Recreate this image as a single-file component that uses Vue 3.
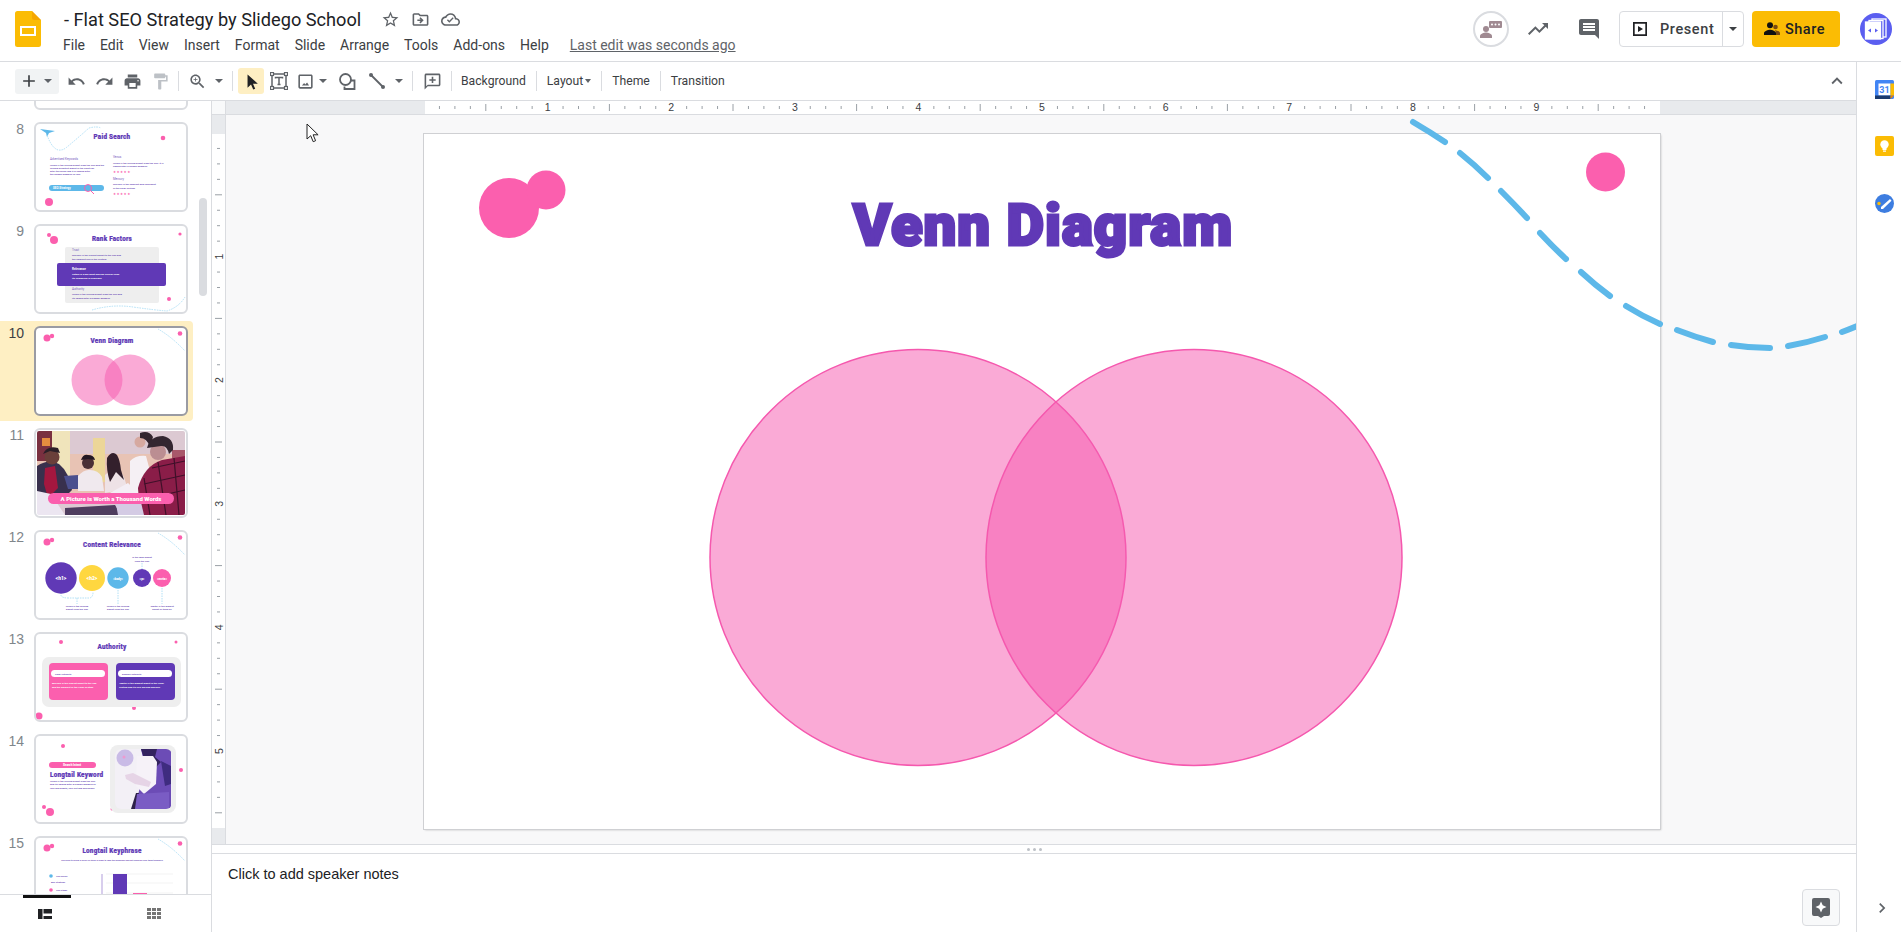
<script setup>
import { computed } from "vue";

const icons = {
  star: "M22 9.24l-7.19-.62L12 2 9.19 8.63 2 9.24l5.46 4.73L5.82 21 12 17.27 18.18 21l-1.63-7.03L22 9.24zM12 15.4l-3.76 2.27 1-4.28-3.32-2.88 4.38-.38L12 6.1l1.71 4.04 4.38.38-3.32 2.88 1 4.28L12 15.4z",
  move: "M20 6h-8l-2-2H4c-1.1 0-1.99.9-1.99 2L2 18c0 1.1.9 2 2 2h16c1.1 0 2-.9 2-2V8c0-1.1-.9-2-2-2zm0 12H4V6h5.17l2 2H20v10zm-8.01-9l-1.41 1.41L12.16 12H8v2h4.16l-1.59 1.59L11.99 17 16 13.01 11.99 9z",
  cloud: "M19.35 10.04C18.67 6.59 15.64 4 12 4 9.11 4 6.6 5.64 5.35 8.04 2.34 8.36 0 10.91 0 14c0 3.31 2.69 6 6 6h13c2.76 0 5-2.24 5-5 0-2.64-2.05-4.78-4.65-4.96zM19 18H6c-2.21 0-4-1.79-4-4s1.79-4 4-4h.71C7.37 7.69 9.48 6 12 6c3.04 0 5.5 2.46 5.5 5.5v.5H19c1.66 0 3 1.34 3 3s-1.34 3-3 3zM10.5 16l-3-3 1.2-1.2 1.8 1.8 4.3-4.3 1.2 1.2z",
  trend: "M16 6l2.29 2.29-4.88 4.88-4-4L2 16.59 3.41 18l6-6 4 4 6.3-6.29L22 12V6z",
  comment: "M21.99 4c0-1.1-.89-2-1.99-2H4c-1.1 0-2 .9-2 2v12c0 1.1.9 2 2 2h14l4 4-.01-18zM18 14H6v-2h12v2zm0-3H6V9h12v2zm0-3H6V6h12v2z",
  plus: "M19 13h-6v6h-2v-6H5v-2h6V5h2v6h6v2z",
  undo: "M12.5 8c-2.65 0-5.05.99-6.9 2.6L2 7v9h9l-3.62-3.62c1.39-1.16 3.16-1.88 5.12-1.88 3.54 0 6.55 2.31 7.6 5.5l2.37-.78C21.08 11.03 17.15 8 12.5 8z",
  redo: "M18.4 10.6C16.55 8.99 14.15 8 11.5 8c-4.65 0-8.58 3.03-9.96 7.22L3.9 16c1.05-3.19 4.05-5.5 7.6-5.5 1.95 0 3.73.72 5.12 1.88L13 16h9V7l-3.6 3.6z",
  print: "M19 8H5c-1.66 0-3 1.34-3 3v6h4v4h12v-4h4v-6c0-1.66-1.34-3-3-3zm-3 11H8v-5h8v5zm3-7c-.55 0-1-.45-1-1s.45-1 1-1 1 .45 1 1-.45 1-1 1zm-1-9H6v4h12V3z",
  paint: "M18 4V3c0-.55-.45-1-1-1H5c-.55 0-1 .45-1 1v4c0 .55.45 1 1 1h12c.55 0 1-.45 1-1V6h1v4H9v11c0 .55.45 1 1 1h2c.55 0 1-.45 1-1v-9h8V4h-3z",
  zoom: "M15.5 14h-.79l-.28-.27C15.41 12.59 16 11.11 16 9.5 16 5.91 13.09 3 9.5 3S3 5.91 3 9.5 5.91 16 9.5 16c1.61 0 3.09-.59 4.23-1.57l.27.28v.79l5 4.99L20.49 19l-4.99-5zm-6 0C7.01 14 5 11.99 5 9.5S7.01 5 9.5 5 14 7.01 14 9.5 11.99 14 9.5 14zM12 10h-2v2H9v-2H7V9h2V7h1v2h2v1z",
  cursor: "M7 3v17l4.400-4.200 2.800 6.400 2.500-1.100-2.800-6.300H20z",
  image: "M19 3H5c-1.100 0-2 .9-2 2v14c0 1.100.9 2 2 2h14c1.100 0 2-.9 2-2V5c0-1.100-.9-2-2-2zm0 16H5V5h14v14zm-5.040-5.710l-2.200 2.500-1.500-1.800L7.500 17h9l-2.540-3.710z",
  addComment: "M20 2H4c-1.1 0-2 .9-2 2v18l4-4h14c1.1 0 2-.9 2-2V4c0-1.1-.9-2-2-2zm0 14H6l-2 2V4h16v12zM13 6h-2v3H8v2h3v3h2v-3h3V9h-3z",
  chevronUp: "M12 8l-6 6 1.41 1.41L12 10.83l4.59 4.58L18 14z",
  chevronRight: "M10 6L8.59 7.41 13.17 12l-4.58 4.59L10 18l6-6z",
};

const menu = ["File", "Edit", "View", "Insert", "Format", "Slide", "Arrange", "Tools", "Add-ons", "Help"];

const inch = 123.6;
const ticks = computed(() => {
  const list = [];
  for (let i = 1; i < 80; i++) list.push({ at: (i * inch) / 8, n: i / 8, kind: i % 8 == 0 ? "num" : i % 8 == 4 ? "long" : "short" });
  return list;
});
const topTicks = computed(() => ticks.value);
const sideTicks = computed(() => ticks.value.filter((t) => t.at < 695));

const lorem = "Venus is the second planet from the Sun";
const venusDashes =
  "M1413 122Q1430 132 1445 142M1460 153Q1475 165 1488 178M1501 191Q1514 204 1527 218M1540 233Q1553 247 1566 259M1581 272Q1595 285 1610 296M1626 306Q1642 316 1660 324M1677 330Q1695 337 1713 342M1731 345Q1750 348 1770 348M1788 346Q1806 343 1825 337M1842 332Q1850 329 1862 324";
</script>

<template>
  <div class="app">
    <header class="topbar">
      <svg class="logo" viewBox="0 0 26 36">
        <path d="M2.5 0H17l9 9v24.5a2.5 2.5 0 0 1-2.500 2.500h-21A2.500 2.500 0 0 1 0 33.500v-31A2.500 2.500 0 0 1 2.500 0z" fill="#fbbc04" />
        <path d="M17 0l9 9h-6.500A2.500 2.500 0 0 1 17 6.500z" fill="#f09300" opacity=".55" />
        <path d="M5 15h16v10H5zm2 2v6h12v-6z" fill="#fff" />
      </svg>
      <div class="doc">
        <div class="doc-title">
          <span class="name">- Flat SEO Strategy by Slidego School</span>
          <svg class="ic title-ic" viewBox="0 0 24 24"><path :d="icons.star" /></svg>
          <svg class="ic title-ic" viewBox="0 0 24 24"><path :d="icons.move" /></svg>
          <svg class="ic title-ic" viewBox="0 0 24 24"><path :d="icons.cloud" /></svg>
        </div>
        <nav class="menu">
          <span v-for="m in menu" :key="m">{{ m }}</span>
          <a class="last-edit">Last edit was seconds ago</a>
        </nav>
      </div>
      <div class="actions">
        <div class="collab">
          <svg viewBox="0 0 24 24" width="24" height="24">
            <circle cx="7" cy="12" r="3" fill="#a08a92" />
            <path d="M1 21v-2c0-2 4-3.500 6-3.500s6 1.500 6 3.500v2z" fill="#a08a92" />
            <rect x="10" y="4" width="13" height="7" rx="1" fill="#a08a92" />
            <circle cx="13" cy="7.500" r="1" fill="#fff" /><circle cx="16.500" cy="7.500" r="1" fill="#fff" /><circle cx="20" cy="7.500" r="1" fill="#fff" />
          </svg>
        </div>
        <svg class="ic trend" viewBox="0 0 24 24"><path :d="icons.trend" /></svg>
        <svg class="ic chat" viewBox="0 0 24 24"><path :d="icons.comment" /></svg>
        <div class="present">
          <div class="present-main">
            <svg viewBox="0 0 14 14" width="14" height="14"><path d="M0 0h14v14H0zm1.700 1.700v10.600h10.600V1.700zM5 4l5 3-5 3z" fill="#202124" fill-rule="evenodd" /></svg>
            <span>Present</span>
          </div>
          <div class="present-more"><i class="caret dark"></i></div>
        </div>
        <div class="share">
          <svg viewBox="0 0 16 14" width="16" height="14">
            <circle cx="6" cy="3.300" r="3" fill="#111" />
            <path d="M0 13v-2c0-2 4-3.300 6-3.300s6 1.300 6 3.300v2z" fill="#111" />
            <circle cx="11.500" cy="5" r="2.300" fill="#7a4a10" />
            <path d="M12 13v-2c0-1-.5-2-1.500-2.700 2 0 5.500 1 5.500 2.700v2z" fill="#7a4a10" />
          </svg>
          <span>Share</span>
        </div>
        <svg class="avatar" viewBox="0 0 32 32">
          <circle cx="16" cy="16" r="16" fill="#5b5ef0" />
          <g fill="#5b5ef0" stroke="#fff" stroke-width="1.300">
            <rect x="12" y="6" width="14" height="18" />
            <rect x="9" y="7.500" width="14" height="18" />
            <rect x="5.500" y="9" width="15" height="17" fill="#fff" />
          </g>
          <path d="M11 15.500v4l-3-2zM15 15.500v4l3-2z" fill="#5b5ef0" />
        </svg>
      </div>
    </header>

    <div class="body">
      <div class="work">
        <div class="toolbar">
          <div class="add">
            <svg class="ic plus" viewBox="0 0 24 24"><path :d="icons.plus" /></svg>
            <i class="caret"></i>
          </div>
          <button class="tool undo"><svg class="ic" viewBox="0 0 24 24"><path :d="icons.undo" /></svg></button>
          <button class="tool"><svg class="ic" viewBox="0 0 24 24"><path :d="icons.redo" /></svg></button>
          <button class="tool"><svg class="ic" viewBox="0 0 24 24"><path :d="icons.print" /></svg></button>
          <button class="tool"><svg class="ic faded" viewBox="0 0 24 24"><path :d="icons.paint" /></svg></button>
          <span class="sep sep-a"></span>
          <button class="tool"><svg class="ic" viewBox="0 0 24 24"><path :d="icons.zoom" /></svg></button>
          <button class="more"><i class="caret"></i></button>
          <span class="sep sep-b"></span>
          <button class="tool selected"><svg class="ic dark-ic" viewBox="0 0 24 24"><path :d="icons.cursor" /></svg></button>
          <button class="tool">
            <svg class="outline" viewBox="0 0 18 18" width="18" height="18">
              <rect x="2" y="2" width="14" height="14" />
              <rect class="knob" x=".5" y=".5" width="3" height="3" /><rect class="knob" x="14.500" y=".5" width="3" height="3" />
              <rect class="knob" x=".5" y="14.500" width="3" height="3" /><rect class="knob" x="14.500" y="14.500" width="3" height="3" />
              <path d="M5.500 6.500v-1h7v1M9 5.500v7M7.500 12.500h3" />
            </svg>
          </button>
          <button class="tool narrow"><svg class="ic" viewBox="0 0 24 24"><path :d="icons.image" /></svg></button>
          <button class="more tight"><i class="caret"></i></button>
          <button class="tool shape">
            <svg class="outline thick" viewBox="0 0 18 18" width="18" height="18">
              <circle cx="7.500" cy="7.500" r="5.500" />
              <path d="M12 8.500h4.500v8.500H6.500v-2.500" />
            </svg>
          </button>
          <button class="tool line">
            <svg class="outline" viewBox="0 0 18 18" width="18" height="18">
              <path class="bar" d="M3 3l12 12" />
              <circle class="dot" cx="3" cy="3" r="2" /><circle class="dot" cx="15" cy="15" r="2" />
            </svg>
          </button>
          <button class="more"><i class="caret"></i></button>
          <span class="sep sep-c"></span>
          <button class="tool"><svg class="ic" viewBox="0 0 24 24"><path :d="icons.addComment" /></svg></button>
          <span class="sep sep-d"></span>
          <span class="txt">Background</span>
          <span class="sep"></span>
          <span class="txt">Layout<i class="caret small"></i></span>
          <span class="sep"></span>
          <span class="txt">Theme</span>
          <span class="sep"></span>
          <span class="txt">Transition</span>
          <svg class="ic collapse" viewBox="0 0 24 24"><path :d="icons.chevronUp" /></svg>
        </div>

        <div class="main">
          <aside class="film">
            <div class="strip">
              <div class="strip-inner">
                <div class="row">
                  <span class="num"></span>
                  <div class="thumb"></div>
                </div>

                <div class="row">
                  <span class="num">8</span>
                  <div class="thumb">
                    <svg viewBox="2 2 150 86">
                      <path d="M6 7l15 2-6 2-2 4-1-4z" fill="#5db8e9" />
                      <path d="M13 13q8 22 20 12t22-19q8-2 12 0" class="mini-dash" />
                      <text x="78" y="17" class="t-title">Paid Search</text>
                      <circle cx="129" cy="16" r="2.300" fill="#fb5fae" />
                      <circle cx="15" cy="80" r="4" fill="#fb5fae" />
                      <text x="16" y="38" class="t-head">Advertised Keywords</text>
                      <text x="16" y="44" class="t-line">{{ lorem }} and the</text>
                      <text x="16" y="47" class="t-line">second-brightest planet in the night sky</text>
                      <text x="16" y="50" class="t-line">after the Moon and it is named after</text>
                      <text x="16" y="53" class="t-line">the Roman goddess of love</text>
                      <rect x="15" y="63" width="55" height="6" rx="3" fill="#5db8e9" />
                      <text x="19" y="67" class="t-white">SEO Strategy</text>
                      <circle cx="54" cy="66" r="3.500" fill="none" stroke="#fb5fae" stroke-width="1" />
                      <path d="M57 69l3 3" stroke="#fb5fae" stroke-width="1" />
                      <text x="79" y="36" class="t-head">Venus</text>
                      <text x="79" y="42" class="t-line">{{ lorem }}. It is</text>
                      <text x="79" y="45" class="t-line">named after a Roman goddess</text>
                      <text x="79" y="51" class="t-star">★★★★★</text>
                      <text x="79" y="58" class="t-head">Mercury</text>
                      <text x="79" y="63" class="t-line">Mercury is the smallest and innermost</text>
                      <text x="79" y="67" class="t-line">of the Solar System</text>
                      <text x="79" y="73" class="t-star">★★★★★</text>
                    </svg>
                  </div>
                </div>

                <div class="row">
                  <span class="num">9</span>
                  <div class="thumb">
                    <svg viewBox="2 2 150 86">
                      <circle cx="15" cy="11" r="2" fill="#fb5fae" />
                      <circle cx="20" cy="16" r="4" fill="#fb5fae" />
                      <circle cx="146" cy="10" r="1.600" fill="#fb5fae" />
                      <circle cx="135" cy="75" r="2" fill="#fb5fae" />
                      <text x="78" y="17" class="t-title">Rank Factors</text>
                      <rect x="31" y="23" width="94" height="56" rx="2" fill="#eee" />
                      <rect x="23" y="39" width="109" height="23" rx="2" fill="#6039b6" />
                      <text x="38" y="27" class="t-head">Trust</text>
                      <text x="38" y="32" class="t-line">Mercury is the closest planet to the Sun and</text>
                      <text x="38" y="36" class="t-line">the smallest one in the System</text>
                      <text x="38" y="46" class="t-white">Relevance</text>
                      <text x="38" y="51" class="t-white thin">Saturn is a gas giant and has several rings</text>
                      <text x="38" y="54.500" class="t-white thin">It's composed of hydrogen</text>
                      <text x="38" y="66" class="t-head">Authority</text>
                      <text x="38" y="71" class="t-line">Venus is the second planet from the Sun and</text>
                      <text x="38" y="75" class="t-line">it's named after a Roman goddess</text>
                      <path d="M58 86q20-6 41-3t34 4q12-4 18-14" class="mini-dash" />
                    </svg>
                  </div>
                </div>

                <div class="row active">
                  <span class="num">10</span>
                  <div class="thumb">
                    <svg viewBox="2 2 150 86">
                      <circle cx="13" cy="12" r="3.500" fill="#fb5fae" />
                      <circle cx="18" cy="10" r="2.200" fill="#fb5fae" />
                      <circle cx="146" cy="7.500" r="2.300" fill="#fb5fae" />
                      <text x="78" y="17" class="t-title">Venn Diagram</text>
                      <circle cx="63" cy="54" r="25.500" class="mini-venn" />
                      <circle cx="96" cy="54" r="25.500" class="mini-venn" />
                      <path d="M124 3q14 8 27 22" class="mini-dash" />
                    </svg>
                  </div>
                </div>

                <div class="row">
                  <span class="num">11</span>
                  <div class="thumb">
                    <svg viewBox="2 2 150 86">
                      <defs>
                        <clipPath id="photo11"><rect x="3" y="3" width="148" height="84" rx="2" /></clipPath>
                      </defs>
                      <g clip-path="url(#photo11)">
                        <g class="blurred">
                          <rect x="3" y="3" width="148" height="84" fill="#dcc9d2" />
                          <rect x="3" y="26" width="148" height="40" fill="#e8c3b4" />
                          <rect x="3" y="3" width="15" height="30" fill="#7a3040" />
                          <rect x="8" y="10" width="8" height="8" fill="#e58d3f" />
                          <rect x="18" y="3" width="18" height="46" fill="#f0e4bb" />
                          <rect x="59" y="10" width="12" height="44" fill="#ecd698" />
                          <rect x="138" y="22" width="13" height="12" fill="#a8576a" />
                          <!-- left man -->
                          <path d="M3 38q12-8 22-2 10 8 13 26l-8 8H3z" fill="#38304d" />
                          <path d="M11 40l10-2 3 22-10 10-4-14z" fill="#a3173f" />
                          <circle cx="18" cy="29" r="7.500" fill="#6a3f3a" />
                          <path d="M9 26q4-9 15-6l2 5-10-2z" fill="#2b1f28" />
                          <path d="M30 48l14-1 2 14H34z" fill="#4b4f8e" />
                          <!-- center -->
                          <path d="M44 48q6-7 12-6 8 0 12 7l2 14H44z" fill="#f0e9ee" />
                          <circle cx="54" cy="35" r="6" fill="#4a2f35" />
                          <path d="M47 32q2-6 7-5 6 0 7 5l-7-1z" fill="#231823" />
                          <!-- woman -->
                          <path d="M71 47q8-7 14-4 6 4 8 18l-22 4z" fill="#eee2e6" />
                          <path d="M73 30q5-8 10-3 3 5 4 15l3 10-8-8-6 10q-4-12-3-24z" fill="#33202c" />
                          <path d="M74 66l20-11 12 11-12 6z" fill="#f4eef5" />
                          <!-- right woman -->
                          <path d="M96 33q6-6 16-5l8 30-12 10-12-6z" fill="#f5f0f4" />
                          <circle cx="106" cy="14" r="5.500" fill="#d6a9a0" />
                          <path d="M106 5q9-3 13 4l-3 10q-3-9-10-9z" fill="#33252e" />
                          <!-- right man -->
                          <path d="M104 60q6-22 24-28l23-4v59h-45z" fill="#8a1d48" />
                          <path d="M118 40l33-7M110 56l41-9M107 72l44-10M124 34l8 53M140 30l5 57M110 50l6 37" stroke="#3f1029" stroke-width="1.200" />
                          <circle cx="124" cy="24" r="8" fill="#bb8e92" />
                          <path d="M113 20q3-12 16-12 11 2 10 14l-4 4q-2-9-8-8-7 1-14 2z" fill="#332630" />
                          <!-- foreground -->
                          <path d="M3 63l14 3 14 21H3z" fill="#ece6f1" />
                          <path d="M31 80l50-3 6 10H31z" fill="#4e3d5e" />
                          <path d="M82 76l24-6 4 17H84z" fill="#d4cbe4" />
                        </g>
                      </g>
                      <rect x="14" y="65" width="126" height="11" rx="5.500" fill="#fb5fae" />
                      <text x="77" y="72.500" class="t-pill">A Picture is Worth a Thousand Words</text>
                    </svg>
                  </div>
                </div>

                <div class="row">
                  <span class="num">12</span>
                  <div class="thumb">
                    <svg viewBox="2 2 150 86">
                      <circle cx="13" cy="12" r="3.500" fill="#fb5fae" />
                      <circle cx="18" cy="10" r="2.200" fill="#fb5fae" />
                      <circle cx="146" cy="7.500" r="2.300" fill="#fb5fae" />
                      <path d="M124 3q14 8 27 22" class="mini-dash" />
                      <text x="78" y="17" class="t-title">Content Relevance</text>
                      <text x="108" y="28" class="t-line center">Is the ideal planet</text>
                      <text x="108" y="32" class="t-line center">from the Sun</text>
                      <path d="M108 33v6M27 65q0 3 8 3h20q4 0 4-6M43 68v6M84 60v14M128 58v16" class="mini-dash" />
                      <circle cx="27" cy="48" r="15.700" fill="#6039b6" />
                      <circle cx="58" cy="48" r="13" fill="#ffd740" />
                      <circle cx="84" cy="48" r="10.700" fill="#5db8e9" />
                      <circle cx="108" cy="48" r="9" fill="#6039b6" />
                      <circle cx="128" cy="48" r="9" fill="#fb5fae" />
                      <text x="27" y="50" class="t-pill h">&lt;h1&gt;</text>
                      <text x="58" y="50" class="t-pill h">&lt;h2&gt;</text>
                      <text x="84" y="49.500" class="t-pill small">&lt;body&gt;</text>
                      <text x="108" y="49.500" class="t-pill small">&lt;p&gt;</text>
                      <text x="128" y="49.500" class="t-pill small">&lt;meta&gt;</text>
                      <text x="43" y="77" class="t-line center">Venus is the second</text>
                      <text x="43" y="80" class="t-line center">planet from the Sun</text>
                      <text x="84" y="77" class="t-line center">Venus is the second</text>
                      <text x="84" y="80" class="t-line center">planet from the Sun</text>
                      <text x="128" y="77" class="t-line center">Jupiter is the biggest</text>
                      <text x="128" y="80" class="t-line center">planet of them all</text>
                    </svg>
                  </div>
                </div>

                <div class="row">
                  <span class="num">13</span>
                  <div class="thumb">
                    <svg viewBox="2 2 150 86">
                      <circle cx="27" cy="10" r="2" fill="#fb5fae" />
                      <circle cx="142" cy="10" r="1.500" fill="#fb5fae" />
                      <circle cx="100" cy="76" r="2" fill="#fb5fae" />
                      <circle cx="5" cy="84" r="3.500" fill="#fb5fae" />
                      <text x="78" y="17" class="t-title">Authority</text>
                      <rect x="8" y="25" width="139" height="50" rx="7" fill="#eee" />
                      <rect x="15" y="31" width="59" height="37" rx="4" fill="#fb5fae" />
                      <rect x="82" y="31" width="59" height="37" rx="4" fill="#6039b6" />
                      <rect x="17" y="38" width="54" height="7" rx="3.500" fill="#fff" />
                      <rect x="84" y="38" width="54" height="7" rx="3.500" fill="#fff" />
                      <text x="21" y="42.500" class="t-line">Page Authority</text>
                      <text x="88" y="42.500" class="t-line">Domain Authority</text>
                      <text x="18" y="52" class="t-white thin">Mercury is the closest planet to the Sun</text>
                      <text x="18" y="55.500" class="t-white thin">and the smallest of the Solar System</text>
                      <text x="85" y="52" class="t-white thin">Jupiter is the biggest planet in the Solar</text>
                      <text x="85" y="55.500" class="t-white thin">System and it's very big and massive</text>
                    </svg>
                  </div>
                </div>

                <div class="row">
                  <span class="num">14</span>
                  <div class="thumb">
                    <svg viewBox="2 2 150 86">
                      <defs>
                        <clipPath id="photo14"><rect x="81" y="15" width="57" height="60" rx="6" /></clipPath>
                      </defs>
                      <circle cx="29" cy="12" r="2" fill="#fb5fae" />
                      <circle cx="147" cy="36" r="2" fill="#fb5fae" />
                      <circle cx="10" cy="73" r="2" fill="#fb5fae" />
                      <circle cx="16" cy="78" r="4" fill="#fb5fae" />
                      <circle cx="78" cy="75" r="1.500" fill="#fb5fae" />
                      <rect x="15" y="28" width="47" height="6" rx="3" fill="#fb5fae" />
                      <text x="38" y="32" class="t-pill small">Search Intent</text>
                      <text x="16" y="43" class="t-title left">Longtail Keyword</text>
                      <text x="16" y="48" class="t-line">Venus is the second planet from the Sun</text>
                      <text x="16" y="51" class="t-line">and it's named after a Roman goddess of</text>
                      <text x="16" y="54.500" class="t-line">love and beauty, very hot and poisonous</text>
                      <rect x="76" y="11" width="66" height="68" rx="8" fill="#eee" />
                      <g clip-path="url(#photo14)">
                        <g class="blurred">
                          <rect x="81" y="15" width="57" height="60" fill="#f3f0f6" />
                          <circle cx="91" cy="24" r="8.500" fill="#c9bbe6" />
                          <circle cx="90" cy="23" r="1.500" fill="#ee9ad0" />
                          <path d="M107 15h30v60h-38l4-10 5-20 4-8z" fill="#6c4cb6" />
                          <path d="M107 15h16l-2 8 6 5-6 6-8 0z" fill="#33235f" />
                          <path d="M127 27l10 5v18l-6 2z" fill="#3f2c80" />
                          <path d="M103 22h16l4 6-1 22-12 10-8-8z" fill="#f6f2f8" />
                          <path d="M91 41l8-2 18 9-2 5-14-3-9-5z" fill="#e6d4e6" />
                          <path d="M97 75l5-16 3 0-2 16z" fill="#2d2148" />
                          <path d="M103 60l32-2v17H101z" fill="#7a5cc4" />
                        </g>
                      </g>
                    </svg>
                  </div>
                </div>

                <div class="row">
                  <span class="num">15</span>
                  <div class="thumb">
                    <svg viewBox="2 2 150 86">
                      <circle cx="13" cy="12" r="3.500" fill="#fb5fae" />
                      <circle cx="18" cy="10" r="2.200" fill="#fb5fae" />
                      <circle cx="146" cy="7.500" r="2.300" fill="#fb5fae" />
                      <path d="M124 3q14 8 27 22" class="mini-dash" />
                      <text x="78" y="17" class="t-title">Longtail Keyphrase</text>
                      <text x="78" y="25" class="t-line center tiny">You need to follow a series of steps in order to rank the keyphrase and get found by your target audience</text>
                      <circle cx="17" cy="40" r="1.800" fill="#5db8e9" />
                      <text x="22" y="41" class="t-line">The Moon</text>
                      <text x="17" y="47" class="t-line">Buy Strategy</text>
                      <circle cx="17" cy="54" r="1.800" fill="#fb5fae" />
                      <text x="22" y="55" class="t-line">The Study</text>
                      <path d="M68 38v30" stroke="#6039b6" stroke-width=".5" />
                      <path d="M72 38h67M72 47h67M72 57h67" stroke="#eee" stroke-width=".7" />
                      <rect x="79" y="38" width="14" height="30" fill="#6039b6" />
                      <rect x="99" y="57" width="14" height="10" fill="#fb5fae" />
                    </svg>
                  </div>
                </div>
              </div>
              <div class="scrollbar"></div>
            </div>
            <div class="film-foot">
              <div class="tab on">
                <svg viewBox="0 0 14 10" width="14" height="10"><path d="M0 0h4.500v10H0zM5.500 0H14v4.500H5.500zM5.500 7H14v3H5.500z" fill="#202124" /></svg>
              </div>
              <div class="tab">
                <svg viewBox="0 0 14 11" width="14" height="11"><path d="M0 0h4v3H0zM5 0h4v3H5zM10 0h4v3h-4zM0 4h4v3H0zM5 4h4v3H5zM10 4h4v3h-4zM0 8h4v3H0zM5 8h4v3H5zM10 8h4v3h-4z" fill="#757575" /></svg>
              </div>
            </div>
          </aside>

          <section class="editor">
            <div class="ruler-row">
              <div class="corner"></div>
              <svg class="h-ruler" width="1630" height="13">
                <rect x="199" y="0" width="1235" height="13" fill="#fff" />
                <g v-for="t in topTicks" :key="t.n">
                  <text v-if="t.kind == 'num'" :x="198 + t.at" y="10" class="r-num">{{ t.n }}</text>
                  <line v-else :x1="198 + t.at" :x2="198 + t.at" :y1="t.kind == 'long' ? 3 : 5" :y2="t.kind == 'long' ? 10 : 8" />
                </g>
              </svg>
            </div>
            <div class="canvas-row">
              <svg class="v-ruler" width="13" height="729">
                <rect x="0" y="19" width="13" height="694" fill="#fff" />
                <g v-for="t in sideTicks" :key="t.n">
                  <text v-if="t.kind == 'num'" x="0" y="0" class="r-num" :transform="`translate(10.500 ${18 + t.at}) rotate(-90)`">{{ t.n }}</text>
                  <line v-else :y1="18 + t.at" :y2="18 + t.at" :x1="t.kind == 'long' ? 3 : 5" :x2="t.kind == 'long' ? 10 : 8" />
                </g>
              </svg>
              <div class="canvas">
                <div class="slide">
                  <svg class="slide-art" viewBox="0 0 1236 695" width="1236" height="695">
                    <circle cx="85" cy="74" r="30" fill="#fb5fae" />
                    <circle cx="122" cy="56" r="19.500" fill="#fb5fae" />
                    <circle cx="1181.500" cy="38" r="19.500" fill="#fb5fae" />
                    <text x="619" y="111" class="slide-title">Venn Diagram</text>
                    <circle cx="494" cy="423.500" r="208" class="venn" />
                    <circle cx="770" cy="423.500" r="208" class="venn" />
                    <path :d="venusDashes" transform="translate(-424 -134)" class="dashes" />
                  </svg>
                </div>
              </div>
            </div>
            <div class="drag"><i></i><i></i><i></i></div>
            <div class="notes">
              <span>Click to add speaker notes</span>
              <button class="assist">
                <svg viewBox="0 0 18 20" width="18" height="20">
                  <path d="M2 0h14a2 2 0 0 1 2 2v14a2 2 0 0 1-2 2h-4l-3 2-3-2H2a2 2 0 0 1-2-2V2a2 2 0 0 1 2-2z" fill="#5f6368" />
                  <path d="M9 3.500l1.700 3.800L14.500 9l-3.800 1.700L9 14.500l-1.700-3.800L3.500 9l3.800-1.700z" fill="#fff" />
                </svg>
              </button>
            </div>
          </section>
        </div>
      </div>

      <aside class="side">
        <svg class="side-ic cal" viewBox="0 0 19 19">
          <rect width="19" height="19" rx="1.500" fill="#4285f4" />
          <rect x="3.500" y="3.500" width="12" height="12" fill="#fff" />
          <rect x="15.500" y="3.500" width="3.500" height="12" fill="#fbbc04" />
          <rect y="15.500" width="15.500" height="3.500" fill="#1a3a6e" />
          <path d="M15.500 15.500H19L15.500 19z" fill="#ea8600" />
          <text x="9.500" y="13" class="cal-num">31</text>
        </svg>
        <svg class="side-ic keep" viewBox="0 0 19 20">
          <rect width="19" height="20" rx="2" fill="#fbbc04" />
          <circle cx="9.500" cy="8.500" r="4.200" fill="#fff" />
          <rect x="7.500" y="12" width="4" height="2" fill="#fff" />
          <rect x="8" y="14.500" width="3" height="1.200" fill="#fff" />
        </svg>
        <svg class="side-ic tasks" viewBox="0 0 19 19">
          <circle cx="9.500" cy="9.500" r="9.500" fill="#3d7de0" />
          <path d="M6 13L15 5l1.500 1.700L8 15H6z" fill="#fff" />
          <circle cx="4" cy="9.500" r="1.700" fill="#fbbc04" />
        </svg>
        <svg class="ic side-arrow" viewBox="0 0 24 24"><path :d="icons.chevronRight" /></svg>
      </aside>
    </div>

    <svg class="pointer" viewBox="0 0 13 20" width="13" height="20">
      <path d="M1 1v15l3.700-3.300 2.500 6 2.400-1-2.500-5.900h5z" fill="#fff" stroke="#222" stroke-width="1" />
    </svg>
  </div>
</template>

<style scoped>
.app {
  position: relative;
  width: 1901px;
  height: 932px;
  overflow: hidden;
  background: #fff;
  color: #3c4043;
  font-family: Roboto, "Liberation Sans", sans-serif;
  display: flex;
  flex-direction: column;
}
.ic {
  width: 20px;
  height: 20px;
  fill: #5f6368;
  display: block;
}
.caret {
  display: inline-block;
  width: 0;
  height: 0;
  border-left: 4px solid transparent;
  border-right: 4px solid transparent;
  border-top: 4px solid #5f6368;
}
.caret.dark {
  border-top-color: #3c4043;
}
.caret.small {
  border-left-width: 3.5px;
  border-right-width: 3.5px;
  margin-left: 2px;
  vertical-align: 2px;
}

/* top bar */
.topbar {
  height: 62px;
  flex: none;
  border-bottom: 1px solid #dadce0;
  box-sizing: border-box;
  display: flex;
}
.logo {
  width: 26px;
  height: 36px;
  margin: 11px 0 0 15px;
}
.doc {
  margin-left: 22px;
  padding-top: 6px;
}
.doc-title {
  display: flex;
  align-items: center;
  height: 26px;
}
.name {
  font-size: 18.200px;
  color: #202124;
  width: 317px;
  padding-left: 1px;
  white-space: nowrap;
}
.title-ic {
  width: 19px;
  height: 19px;
  margin-right: 11px;
}
.menu {
  display: flex;
  gap: 15px;
  font-size: 14px;
  color: #3c4043;
  margin-top: 3px;
  line-height: 20px;
}
.last-edit {
  margin-left: 6px;
  color: #5f6368;
  text-decoration: underline;
}
.actions {
  margin-left: auto;
  display: flex;
  align-items: center;
  padding: 0 9px 3px 0;
}
.collab {
  width: 36px;
  height: 36px;
  border: 2px solid #dadce0;
  border-radius: 50%;
  display: flex;
  align-items: center;
  justify-content: center;
  box-sizing: border-box;
}
.trend {
  width: 24px;
  height: 24px;
  margin-left: 17px;
}
.chat {
  width: 24px;
  height: 24px;
  margin-left: 27px;
}
.present {
  display: flex;
  height: 36px;
  margin-left: 18px;
  border: 1px solid #dadce0;
  border-radius: 4px;
  box-sizing: border-box;
}
.present-main {
  width: 103px;
  display: flex;
  align-items: center;
  padding-left: 13px;
  gap: 13px;
  box-sizing: border-box;
  border-right: 1px solid #dadce0;
  font-size: 14.500px;
  letter-spacing: 0.6px;
  font-weight: 500;
}
.present-more {
  width: 20px;
  display: flex;
  align-items: center;
  justify-content: center;
}
.share {
  width: 88px;
  height: 36px;
  margin-left: 8px;
  background: #fbbc04;
  border-radius: 4px;
  display: flex;
  align-items: center;
  padding-left: 12px;
  gap: 5px;
  box-sizing: border-box;
  font-size: 14.500px;
  font-weight: 500;
  letter-spacing: 0.5px;
  color: #202124;
}
.avatar {
  width: 32px;
  height: 32px;
  margin-left: 20px;
}

/* body */
.body {
  flex: 1;
  display: flex;
  min-height: 0;
}
.work {
  flex: 1;
  min-width: 0;
  display: flex;
  flex-direction: column;
}
.toolbar {
  height: 39px;
  flex: none;
  border-bottom: 1px solid #dadce0;
  box-sizing: border-box;
  display: flex;
  align-items: center;
  padding-left: 15px;
  font-size: 12.200px;
  font-weight: 400;
}
button {
  border: 0;
  background: none;
  padding: 0;
  font: inherit;
  display: flex;
  align-items: center;
  justify-content: center;
}
.add {
  width: 44px;
  height: 25px;
  background: #f1f3f4;
  border-radius: 3px;
  display: flex;
  align-items: center;
  padding-left: 4px;
  gap: 5px;
  box-sizing: border-box;
}
.plus {
  fill: #3c4043;
}
.tool {
  width: 28px;
  height: 26px;
  flex: none;
}
.tool .ic {
  width: 19px;
  height: 19px;
}
.outline {
  fill: none;
  stroke: #5f6368;
  stroke-width: 1.500;
}
.outline .knob {
  fill: #fff;
  stroke-width: 1.200;
}
.outline.thick {
  stroke-width: 1.800;
}
.outline .bar {
  stroke-width: 1.800;
}
.outline .dot {
  fill: #5f6368;
  stroke: none;
}
.undo {
  margin-left: 3px;
}
.faded {
  fill: #bdc1c6;
}
.sep {
  width: 1px;
  height: 20px;
  background: #dadce0;
  margin: 0 10px;
  flex: none;
}
.sep-a {
  margin: 0 4px 0 4px;
}
.more {
  width: 16px;
  height: 26px;
  flex: none;
}
.sep-b {
  margin: 0 5px;
}
.selected {
  width: 26px;
  background: #feefc3;
  border-radius: 3px;
  margin-right: 1px;
}
.selected .ic {
  fill: #202124;
}
.narrow {
  width: 24px;
}
.tight {
  width: 12px;
}
.shape {
  margin-left: 4px;
}
.line {
  margin-left: 2px;
}
.sep-c {
  margin: 0 5px;
}
.sep-d {
  margin: 0 9px 0 5px;
}
.txt {
  white-space: nowrap;
}
.collapse {
  margin-left: auto;
  margin-right: 8px;
  width: 22px;
  height: 22px;
}
.main {
  flex: 1;
  min-height: 0;
  display: flex;
}

/* filmstrip */
.film {
  width: 212px;
  flex: none;
  border-right: 1px solid #dadce0;
  box-sizing: border-box;
  display: flex;
  flex-direction: column;
}
.strip {
  flex: 1;
  min-height: 0;
  overflow: hidden;
  position: relative;
}
.strip-inner {
  margin-top: -86px;
  display: flex;
  flex-direction: column;
  gap: 2px;
}
.row {
  width: 193px;
  height: 100px;
  flex: none;
  padding-top: 5px;
  box-sizing: border-box;
  display: flex;
  gap: 10px;
  border-radius: 0 4px 4px 0;
}
.row.active {
  background: #feefc3;
}
.num {
  width: 24px;
  text-align: right;
  font: 14px/14px "Liberation Sans", sans-serif;
  color: #80868b;
}
.active .num {
  color: #3c4043;
}
.thumb {
  width: 154px;
  height: 90px;
  flex: none;
  border: 2px solid #dadce0;
  border-radius: 6px;
  background: #fff;
  box-sizing: border-box;
  overflow: hidden;
}
.active .thumb {
  border-color: #9a9ba3;
}
.thumb svg {
  width: 150px;
  height: 86px;
  display: block;
}
.blurred {
  filter: blur(0.5px);
}
.t-title {
  font: 900 6.300px Roboto, sans-serif;
  fill: #6039b6;
  stroke: #6039b6;
  stroke-width: 0.2px;
  letter-spacing: 0.25px;
  text-anchor: middle;
}
.t-title.left {
  text-anchor: start;
}
.t-head {
  font: 400 3px Roboto, sans-serif;
  fill: #7a5cc0;
}
.t-line {
  font: 500 2.500px Roboto, sans-serif;
  fill: #5b36b0;
}
.t-line.center {
  text-anchor: middle;
}
.t-line.tiny {
  font-size: 2.200px;
}
.t-white {
  font: 700 3px Roboto, sans-serif;
  fill: #fff;
}
.t-white.thin {
  font-size: 2.500px;
}
.t-star {
  font: 3.500px "DejaVu Sans", sans-serif;
  fill: #fb5fae;
  letter-spacing: 0.4px;
}
.t-pill {
  font: 900 6px Roboto, sans-serif;
  fill: #fff;
  text-anchor: middle;
}
.t-pill.h {
  font-size: 5px;
}
.t-pill.small {
  font-size: 3px;
}
.mini-dash {
  fill: none;
  stroke: #a9dcf5;
  stroke-width: 0.9;
  stroke-dasharray: 1.500 1;
}
.mini-venn {
  fill: #f65cb0;
  fill-opacity: 0.52;
}
.scrollbar {
  position: absolute;
  left: 199px;
  top: 97px;
  width: 8px;
  height: 98px;
  border-radius: 4px;
  background: #dadce0;
}
.film-foot {
  height: 38px;
  flex: none;
  border-top: 1px solid #dadce0;
  box-sizing: border-box;
  display: flex;
  padding-left: 23px;
  gap: 59px;
}
.tab {
  width: 48px;
  height: 37px;
  display: flex;
  align-items: center;
  justify-content: center;
  box-sizing: border-box;
}
.tab.on {
  border-top: 3px solid #111;
  padding: 0 4px 3px 0;
}

/* editor */
.editor {
  flex: 1;
  min-width: 0;
  display: flex;
  flex-direction: column;
}
.ruler-row {
  height: 14px;
  flex: none;
  display: flex;
  border-bottom: 1px solid #dadce0;
  box-sizing: border-box;
  background: #e8eaed;
}
.corner {
  width: 14px;
  flex: none;
  background: #f8f9fa;
  border-right: 1px solid #dadce0;
  box-sizing: border-box;
}
.h-ruler,
.v-ruler {
  display: block;
  flex: none;
}
.h-ruler line,
.v-ruler line {
  stroke: #9aa0a6;
  stroke-width: 1;
}
.r-num {
  font: 10.500px "Liberation Sans", sans-serif;
  fill: #3c4043;
  text-anchor: middle;
}
.canvas-row {
  height: 729px;
  flex: none;
  display: flex;
}
.v-ruler {
  width: 13px;
  background: #e8eaed;
  border-right: 1px solid #dadce0;
  box-sizing: content-box;
}
.canvas {
  flex: 1;
  min-width: 0;
  background: #f8f8f9;
  overflow: hidden;
  padding: 19px 0 0 198px;
  box-sizing: border-box;
}
.slide {
  width: 1236px;
  height: 695px;
  background: #fff;
  box-shadow: 0 0 0 1px #cfd0d3, 1px 1px 2px #bdbdbd;
}
.slide-art {
  display: block;
  overflow: visible;
}
.slide-title {
  font: 900 58px Roboto, sans-serif;
  fill: #6039b6;
  stroke: #6039b6;
  stroke-width: 3px;
  letter-spacing: 1px;
  text-anchor: middle;
}
.venn {
  fill: #f65cb0;
  fill-opacity: 0.52;
  stroke: #f558ae;
  stroke-width: 1.500;
}
.dashes {
  fill: none;
  stroke: #5db8e9;
  stroke-width: 6;
  stroke-linecap: round;
}
.drag {
  height: 10px;
  flex: none;
  border-top: 1px solid #dadce0;
  border-bottom: 1px solid #dadce0;
  box-sizing: border-box;
  display: flex;
  align-items: center;
  justify-content: center;
  gap: 3px;
  background: #fff;
}
.drag i {
  width: 3px;
  height: 3px;
  border-radius: 50%;
  background: #bdc1c6;
}
.notes {
  flex: 1;
  position: relative;
  font: 14.500px "Liberation Sans", sans-serif;
  color: #202124;
  padding: 12px 0 0 16px;
}
.assist {
  position: absolute;
  right: 16px;
  top: 35px;
  width: 38px;
  height: 37px;
  background: #f8f9fa;
  border: 1px solid #dadce0;
  border-radius: 4px;
  box-sizing: border-box;
}

/* side panel */
.side {
  width: 45px;
  flex: none;
  border-left: 1px solid #dadce0;
  box-sizing: border-box;
  display: flex;
  flex-direction: column;
  align-items: flex-start;
  padding: 18px 0 14px 18px;
}
.side-ic {
  width: 19px;
  height: 19px;
  display: block;
}
.keep {
  height: 20px;
  margin-top: 37px;
}
.tasks {
  margin-top: 38px;
}
.cal-num {
  font: 700 9px Roboto, sans-serif;
  fill: #4285f4;
  text-anchor: middle;
}
.side-arrow {
  margin-top: auto;
  margin-left: -3px;
}
.pointer {
  position: absolute;
  left: 306px;
  top: 123px;
}
</style>
